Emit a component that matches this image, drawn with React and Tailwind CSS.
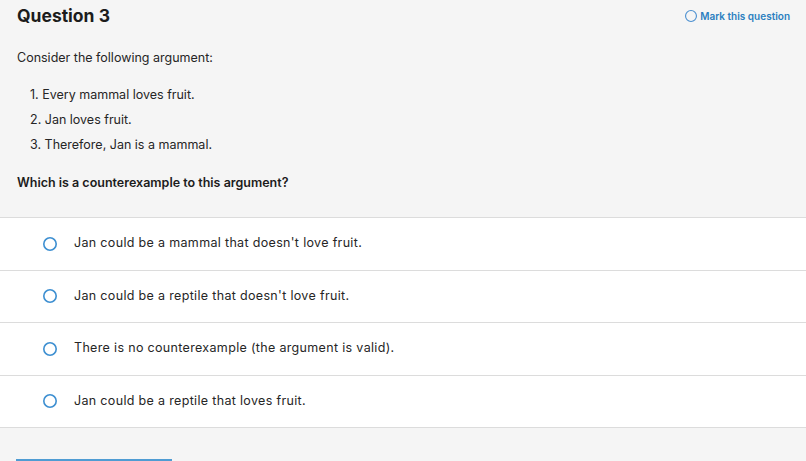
import React from 'react';

const PREMISES = [
  'Every mammal loves fruit.',
  'Jan loves fruit.',
  'Therefore, Jan is a mammal.',
];

const OPTIONS = [
  "Jan could be a mammal that doesn't love fruit.",
  "Jan could be a reptile that doesn't love fruit.",
  'There is no counterexample (the argument is valid).',
  'Jan could be a reptile that loves fruit.',
];

/* ── Radio circle ── */
const Radio = ({ size = 14, stroke = '#3d8fd1', width = 1.6 }) => (
  <svg width={size} height={size} viewBox="0 0 14 14" className="shrink-0">
    <circle cx="7" cy="7" r={7 - width / 2} fill="none" stroke={stroke} strokeWidth={width} />
  </svg>
);

const OptionRow = ({ text }) => (
  <label className="flex items-center h-[52.5px] border-b border-[#dcdcdc] pl-[43px] cursor-pointer">
    <Radio />
    <span className="ml-[17px] text-[12.5px] tracking-[0.33px] text-[#262626]">{text}</span>
  </label>
);

export default function App() {
  return (
    <div
      className="w-[806px] min-h-[461px] bg-[#f5f5f5] overflow-hidden"
      style={{ fontFamily: 'Inter, "Liberation Sans", Arial, sans-serif' }}
    >
      {/* ── Stem ── */}
      <div className="px-[17px] pt-[6px] pb-[25px]">
        <div className="flex items-center justify-between">
          <h1 className="text-[17.5px] leading-[20px] font-bold text-[#1c1c1c]">Question 3</h1>
          <button className="flex items-center gap-[3px] mr-[-1px] text-[10px] font-semibold text-[#2b7fc0]">
            <Radio size={12} stroke="#4a8fd0" width={1.3} />
            Mark this question
          </button>
        </div>

        <p className="mt-[23px] text-[12.5px] leading-[18px] text-[#262626]">
          Consider the following argument:
        </p>

        <ol className="mt-[15px] pl-[13px] text-[12.5px] leading-[25px] text-[#262626]">
          {PREMISES.map((p, i) => (
            <li key={i}>{i + 1}. {p}</li>
          ))}
        </ol>

        <p className="mt-[17px] text-[12.5px] leading-[18px] font-semibold text-[#1c1c1c]">
          Which is a counterexample to this argument?
        </p>
      </div>

      {/* ── Choices ── */}
      <div className="bg-white border-t border-[#dcdcdc]">
        {OPTIONS.map((o) => (
          <OptionRow key={o} text={o} />
        ))}
      </div>

      {/* ── Footer ── */}
      <div className="pt-[31px] px-[16px]">
        <div className="w-[156px] h-[3px] bg-[#4f9cd3]" />
      </div>
    </div>
  );
}
